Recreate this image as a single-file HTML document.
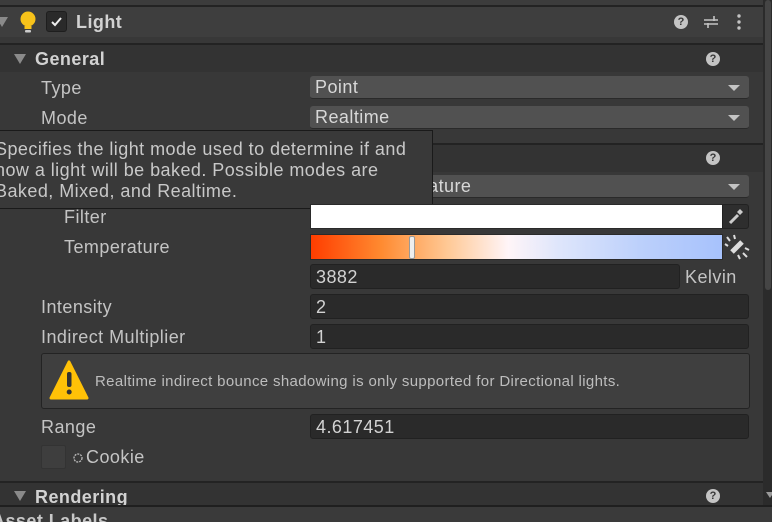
<!DOCTYPE html>
<html><head><meta charset="utf-8"><style>
*{margin:0;padding:0;box-sizing:border-box}
body{width:772px;height:522px;overflow:hidden;background:#383838;font-family:"Liberation Sans",sans-serif;color:#c4c4c4;position:relative;font-size:18px;letter-spacing:0.45px}
.a{position:absolute}
.lbl{position:absolute;left:41px;font-size:18px;line-height:20px}
.fld{position:absolute;left:310px;width:439px;height:25px;background:#2a2a2a;border:1px solid #212121;border-radius:3px;padding-left:5px;line-height:24px;font-size:18px;color:#d2d2d2}
.dd{position:absolute;left:310px;width:439px;height:23px;background:#515151;border-radius:3px;padding-left:5px;line-height:23px;font-size:18px;color:#d8d8d8;border-bottom:1px solid #2a2a2a}
.dd:after{content:"";position:absolute;right:9px;top:9px;border-left:6px solid transparent;border-right:6px solid transparent;border-top:6px solid #c4c4c4}
.help{position:absolute;width:14px;height:14px;border-radius:50%;background:#c4c4c4;color:#383838;font-size:11px;font-weight:bold;text-align:center;line-height:14px;letter-spacing:0}
.tri{position:absolute;border-left:6px solid transparent;border-right:6px solid transparent;border-top:10px solid #8a8a8a}
</style></head><body>
<div class="a" style="left:0;top:0;width:763px;height:6px;background:#3c3c3c"></div>
<div class="a" style="left:0;top:5px;width:763px;height:2px;background:#232323"></div>
<div class="a" style="left:0;top:7px;width:763px;height:30px;background:#3e3e3e"></div>
<div class="a" style="left:0;top:37px;width:763px;height:6px;background:#383838"></div>
<div class="tri" style="left:-4px;top:17px"></div>
<svg class="a" style="left:19px;top:10px" width="18" height="24"><circle cx="9" cy="9" r="7.5" fill="#f7c21a"/><rect x="5.5" y="16" width="7" height="3" fill="#f7c21a"/><rect x="6" y="20" width="6" height="2.5" rx="1" fill="#ccc"/></svg>
<div class="a" style="left:46px;top:11px;width:21px;height:21px;background:#2a2a2a;border:1px solid #1e1e1e;border-radius:3px"></div>
<svg class="a" style="left:49px;top:14px" width="15" height="15"><path d="M3 8 L6 11 L12 4" stroke="#eee" stroke-width="2" fill="none"/></svg>
<div class="a" style="left:76px;top:12px;font-weight:bold;font-size:18px;color:#d2d2d2">Light</div>
<div class="help" style="left:674px;top:15px">?</div>
<svg class="a" style="left:703px;top:14px" width="16" height="16" stroke="#c4c4c4" stroke-width="1.6"><path d="M1 6H15M1 10H15M11 2V7M5 9V14"/></svg>
<svg class="a" style="left:736px;top:13px" width="6" height="18" fill="#c4c4c4"><circle cx="3" cy="3" r="1.7"/><circle cx="3" cy="9" r="1.7"/><circle cx="3" cy="15" r="1.7"/></svg>
<div class="a" style="left:0;top:43px;width:763px;height:2px;background:#232323"></div>
<div class="a" style="left:0;top:45px;width:763px;height:27px;background:#333"></div>
<div class="tri" style="left:14px;top:54px"></div>
<div class="a" style="left:35px;top:49px;font-weight:bold;color:#d2d2d2">General</div>
<div class="help" style="left:706px;top:52px">?</div>
<div class="lbl" style="top:78px">Type</div>
<div class="dd" style="top:76px">Point</div>
<div class="lbl" style="top:108px">Mode</div>
<div class="dd" style="top:106px">Realtime</div>
<div class="a" style="left:0;top:143px;width:763px;height:2px;background:#232323"></div>
<div class="a" style="left:0;top:145px;width:763px;height:27px;background:#333"></div>
<div class="help" style="left:706px;top:151px">?</div>
<div class="dd" style="top:175px">Color Temperature</div>
<div class="a" style="left:-2px;top:130px;width:435px;height:79px;background:#393939;border:1px solid #1a1a1a;font-size:18px;line-height:21px;padding:8px 0 0 0;color:#c8c8c8;white-space:nowrap;overflow:hidden"><div style="margin-left:-4px">Specifies the light mode used to determine if and<br>how a light will be baked. Possible modes are<br>Baked, Mixed, and Realtime.</div></div>
<div class="lbl" style="left:64px;top:207px">Filter</div>
<div class="a" style="left:310px;top:204px;width:413px;height:25px;background:#fff;border:1px solid #2a2a2a"></div>
<div class="a" style="left:722px;top:204px;width:27px;height:25px;background:#2e2e2e;border:1px solid #222;border-radius:0 3px 3px 0"></div>
<svg class="a" style="left:727px;top:207px" width="18" height="18"><path d="M3 16 L11 8" stroke="#ccc" stroke-width="3"/><path d="M10 5 L13 8 L16 5 L13 2Z" fill="#ccc"/></svg>
<div class="lbl" style="left:64px;top:237px">Temperature</div>
<div class="a" style="left:310px;top:234px;width:413px;height:26px;border:1px solid #2a2a2a;background:linear-gradient(90deg,#ff3d00 0%,#ff8a30 17%,#ffc894 33%,#fff5f8 48%,#dfe6fb 60%,#bcd0fb 80%,#a7c2fc 100%)"></div>
<div class="a" style="left:409px;top:236px;width:6px;height:23px;background:#eee;border:1px solid #999;border-radius:2px"></div>
<svg class="a" style="left:724px;top:234px" width="26" height="26" stroke="#ddd" stroke-width="2"><path d="M8 18 L18 8" stroke-width="5"/><path d="M4 12L1 10M6 7L3 3M11 5L10 1M21 14L25 16M19 19L23 23M14 21L16 25"/></svg>
<div class="fld" style="top:264px;width:370px">3882</div>
<div class="a" style="left:685px;top:267px;font-size:18px">Kelvin</div>
<div class="lbl" style="top:297px">Intensity</div>
<div class="fld" style="top:294px">2</div>
<div class="lbl" style="top:327px">Indirect Multiplier</div>
<div class="fld" style="top:324px">1</div>
<div class="a" style="left:41px;top:353px;width:709px;height:56px;background:#3f3f3f;border:1px solid #232323;border-radius:3px"></div>
<svg class="a" style="left:48px;top:360px" width="42" height="42"><path d="M21 2 L39 38 L3 38Z" fill="#ffc107" stroke="#ffc107" stroke-width="3" stroke-linejoin="round"/><rect x="19" y="12" width="4.5" height="15" rx="2" fill="#333"/><circle cx="21.2" cy="32" r="2.5" fill="#333"/></svg>
<div class="a" style="left:95px;top:373px;font-size:15px;letter-spacing:0.35px;color:#bdbdbd">Realtime indirect bounce shadowing is only supported for Directional lights.</div>
<div class="lbl" style="top:417px">Range</div>
<div class="fld" style="top:414px">4.617451</div>
<div class="a" style="left:41px;top:445px;width:25px;height:24px;background:#3e3e3e;border:1px solid #333;border-radius:2px"></div>
<svg class="a" style="left:72px;top:452px" width="12" height="12"><circle cx="6" cy="6" r="4" fill="none" stroke="#bbb" stroke-width="1.3" stroke-dasharray="2 1"/></svg>
<div class="a" style="left:86px;top:447px;font-size:18px">Cookie</div>
<div class="a" style="left:0;top:481px;width:763px;height:2px;background:#232323"></div>
<div class="a" style="left:0;top:483px;width:763px;height:27px;background:#333;overflow:hidden"><div class="tri" style="left:14px;top:8px"></div><div class="a" style="left:35px;top:4px;font-weight:bold;color:#d2d2d2">Rendering</div></div>
<div class="help" style="left:706px;top:489px">?</div>
<div class="a" style="left:0;top:505px;width:772px;height:2px;background:#1f1f1f"></div>
<div class="a" style="left:0;top:507px;width:772px;height:15px;background:#3a3a3a;overflow:hidden"><div class="a" style="left:-8px;top:4px;font-weight:bold;color:#c8c8c8">Asset Labels</div></div>
<div class="a" style="left:763px;top:0;width:9px;height:505px;background:#2b2b2b"></div>
<div class="a" style="left:765px;top:0;width:6px;height:290px;background:#454545;border-radius:3px"></div>
<div class="a" style="left:766px;top:492px;border-left:4px solid transparent;border-right:4px solid transparent;border-top:6px solid #999"></div>
</body></html>
